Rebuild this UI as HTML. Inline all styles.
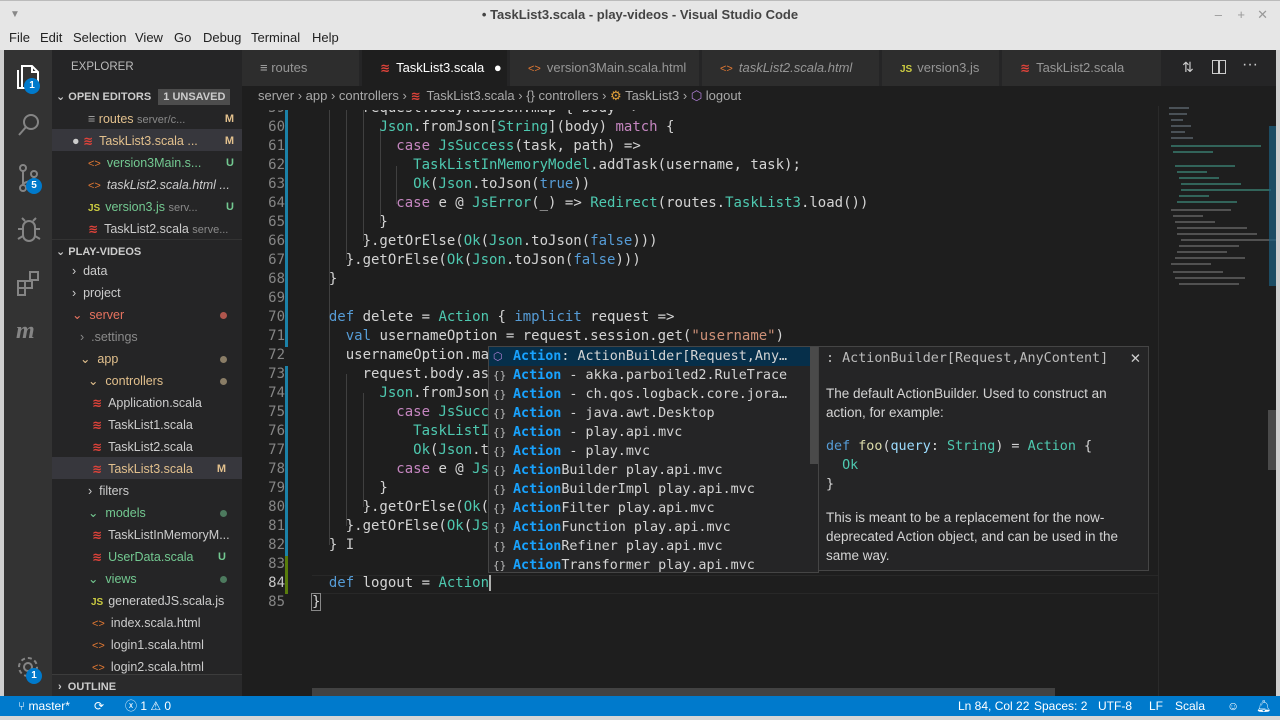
<!DOCTYPE html>
<html><head><meta charset="utf-8"><style>
*{margin:0;padding:0;box-sizing:border-box}
body{width:1280px;height:720px;overflow:hidden;background:#1e1e1e;font-family:"Liberation Sans","DejaVu Sans",sans-serif;position:relative}
.abs{position:absolute}
#title{left:0;top:0;width:1280px;height:28px;background:#e6e6e6;color:#444;font-size:13px;font-weight:bold;text-align:center;line-height:28px;border-top:1px solid #bbb}
#menu{left:0;top:28px;width:1280px;height:22px;background:#e6e6e6;font-size:13px;color:#222;line-height:18px}
#menu span{position:absolute;top:1px}
#act{left:0;top:50px;width:52px;height:646px;background:#333333;border-left:4px solid #cfcfcf}
#side{left:52px;top:50px;width:190px;height:646px;background:#252526;color:#ccc;font-size:12.5px}
.row{position:absolute;left:0;width:190px;height:22px;line-height:24px;white-space:nowrap;overflow:hidden}
.hdr{font-weight:bold;font-size:11px;color:#ccc}
.dim{color:#8a8a8a;font-size:11px}
.M{color:#e2c08d}.U{color:#73c991}.R{color:#e8735f}
.badge{position:absolute;right:8px;font-size:11px;font-weight:bold}
.dot{position:absolute;right:15px;top:9px;width:7px;height:7px;border-radius:50%}
.sc{color:#e0433a;font-weight:bold;font-size:12px;margin-right:6px}
.ht{color:#e37933;margin-right:6px;font-size:11px}
.js{color:#cbcb41;font-weight:bold;font-size:10px;margin-right:5px}
#tabs{left:242px;top:50px;width:1038px;height:36px;background:#252526}
.tab{position:absolute;top:0;height:36px;line-height:36px;background:#2d2d2d;color:#969696;font-size:13px;padding-left:18px;white-space:nowrap;border-right:1px solid #252526}
#bc{left:242px;top:86px;width:916px;height:20px;background:#1e1e1e;color:#a9a9a9;font-size:13px;line-height:20px;padding-left:16px;white-space:nowrap}
#code{left:242px;top:110px;width:916px;height:586px;overflow:hidden;font-family:"DejaVu Sans Mono","Liberation Mono",monospace;font-size:14px}
.ln{position:absolute;left:0;width:43px;text-align:right;color:#858585;height:19px;line-height:19px}
.cl{position:absolute;left:70px;height:19px;line-height:19px;color:#d4d4d4;white-space:pre}
.k{color:#569cd6}.p{color:#c586c0}.t{color:#4ec9b0}.s{color:#ce9178}.f{color:#dcdcaa}
#sug{left:488px;top:346px;width:331px;height:227px;background:#252526;border:1px solid #454545;font-family:"DejaVu Sans Mono",monospace;font-size:13.4px;color:#d4d4d4;z-index:5}
.sr{position:absolute;left:0;width:321px;height:19px;line-height:19px;white-space:pre;padding-left:4px;overflow:hidden}
.sr b{color:#18a3ff;font-weight:bold}
.ic{color:#bbb;font-size:11px;display:inline-block;width:20px}
#det{left:818px;top:346px;width:331px;height:225px;background:#252526;border:1px solid #454545;z-index:5;color:#d4d4d4;font-size:13.5px;padding:0 7px}
#status{left:0;top:696px;width:1280px;height:20px;background:#007acc;color:#fff;font-size:12px;line-height:20px}
#status span{position:absolute;top:0}
</style></head><body>
<div id="title" class="abs"><span style="position:absolute;left:10px;top:0;color:#888;font-size:10px">▼</span>• TaskList3.scala - play-videos - Visual Studio Code<span style="position:absolute;right:58px;color:#999;font-weight:normal">–</span><span style="position:absolute;right:35px;color:#999;font-weight:normal">+</span><span style="position:absolute;right:12px;color:#999;font-weight:normal">✕</span></div>
<div id="menu" class="abs"><span style="left:9px">File</span><span style="left:40px">Edit</span><span style="left:73px">Selection</span><span style="left:135px">View</span><span style="left:174px">Go</span><span style="left:203px">Debug</span><span style="left:251px">Terminal</span><span style="left:312px">Help</span></div>
<div id="act" class="abs">
<svg class="abs" style="left:10px;top:10px" width="30" height="32" viewBox="0 0 30 32" fill="none" stroke="#fff" stroke-width="2"><path d="M8 6h10l6 6v16H8z"/><path d="M4 10v18h4"/><path d="M18 6v6h6"/></svg>
<div class="abs" style="left:20px;top:28px;width:16px;height:16px;border-radius:50%;background:#007acc;color:#fff;font-size:10px;text-align:center;line-height:16px;font-weight:bold">1</div>
<svg class="abs" style="left:10px;top:60px" width="30" height="30" viewBox="0 0 30 30" fill="none" stroke="#858585" stroke-width="2"><circle cx="17" cy="12" r="7"/><path d="M12 17L5 25"/></svg>
<svg class="abs" style="left:10px;top:112px" width="30" height="32" viewBox="0 0 30 32" fill="none" stroke="#858585" stroke-width="2"><circle cx="9" cy="6" r="3"/><circle cx="9" cy="26" r="3"/><circle cx="20" cy="12" r="3"/><path d="M9 9v14M20 15c0 5-11 4-11 8"/></svg>
<div class="abs" style="left:22px;top:128px;width:16px;height:16px;border-radius:50%;background:#007acc;color:#fff;font-size:10px;text-align:center;line-height:16px;font-weight:bold">5</div>
<svg class="abs" style="left:10px;top:165px" width="30" height="30" viewBox="0 0 30 30" fill="none" stroke="#858585" stroke-width="2"><path d="M9 12a6 6 0 0 1 12 0v8a6 6 0 0 1-12 0z"/><path d="M4 14h5M21 14h5M4 24l5-3M26 24l-5-3M11 6L8 3M19 6l3-3"/></svg>
<svg class="abs" style="left:10px;top:218px" width="30" height="30" viewBox="0 0 30 30" fill="none" stroke="#858585" stroke-width="2"><rect x="4" y="13" width="7" height="7"/><rect x="11" y="13" width="7" height="7"/><rect x="4" y="20" width="7" height="7"/><rect x="16" y="4" width="8" height="8"/></svg>
<div class="abs" style="left:12px;top:268px;color:#858585;font-size:24px;font-weight:bold;font-style:italic;font-family:'Liberation Serif',serif">m</div>
<svg class="abs" style="left:10px;top:603px" width="30" height="30" viewBox="0 0 30 30" fill="none" stroke="#858585" stroke-width="2"><circle cx="14" cy="14" r="4"/><circle cx="14" cy="14" r="9" stroke-dasharray="4 3"/></svg>
<div class="abs" style="left:22px;top:618px;width:16px;height:16px;border-radius:50%;background:#007acc;color:#fff;font-size:10px;text-align:center;line-height:16px;font-weight:bold">1</div>
</div>
<div id="side" class="abs">
<div class="row" style="top:5px;padding-left:19px;font-size:11.5px;color:#bbb">EXPLORER</div>
<div class="row hdr" style="top:35px;padding-left:4px">&#8964; OPEN EDITORS <span style="background:#4d4d4d;padding:2px 5px;margin-left:4px;font-weight:bold">1 UNSAVED</span></div>
<div class="row" style="top:57px;padding-left:36px"><span style="color:#aaa">≡ </span><span class="M">routes</span> <span class="dim">server/c...</span><span class="badge M">M</span></div>
<div class="row" style="top:79px;padding-left:20px;background:#37373d"><span style="color:#ccc">●</span> <span class="sc">≋</span><span class="M">TaskList3.scala ...</span><span class="badge M">M</span></div>
<div class="row" style="top:101px;padding-left:36px"><span class="ht">&lt;&gt;</span><span class="U">version3Main.s...</span><span class="badge U">U</span></div>
<div class="row" style="top:123px;padding-left:36px"><span class="ht">&lt;&gt;</span><i style="color:#ccc">taskList2.scala.html ...</i></div>
<div class="row" style="top:145px;padding-left:36px"><span class="js">JS</span><span class="U">version3.js</span> <span class="dim">serv...</span><span class="badge U">U</span></div>
<div class="row" style="top:167px;padding-left:36px"><span class="sc">≋</span>TaskList2.scala <span class="dim">serve...</span></div>
<div class="row hdr" style="top:189px;padding-left:4px;border-top:1px solid #333">&#8964; PLAY-VIDEOS</div>
<div class="row" style="top:209px;padding-left:20px">›&nbsp; data</div>
<div class="row" style="top:231px;padding-left:20px">›&nbsp; project</div>
<div class="row" style="top:253px;padding-left:20px"><span class="R">&#8964;&nbsp; server</span><span class="dot" style="background:#b0564d"></span></div>
<div class="row" style="top:275px;padding-left:28px;color:#8a8a8a">›&nbsp; .settings</div>
<div class="row" style="top:297px;padding-left:28px"><span class="M">&#8964;&nbsp; app</span><span class="dot" style="background:#8a7d66"></span></div>
<div class="row" style="top:319px;padding-left:36px"><span class="M">&#8964;&nbsp; controllers</span><span class="dot" style="background:#8a7d66"></span></div>
<div class="row" style="top:341px;padding-left:40px"><span class="sc">≋</span>Application.scala</div>
<div class="row" style="top:363px;padding-left:40px"><span class="sc">≋</span>TaskList1.scala</div>
<div class="row" style="top:385px;padding-left:40px"><span class="sc">≋</span>TaskList2.scala</div>
<div class="row" style="top:407px;padding-left:40px;background:#37373d"><span class="sc">≋</span><span class="M">TaskList3.scala</span><span class="badge M" style="right:16px">M</span></div>
<div class="row" style="top:429px;padding-left:36px">›&nbsp; filters</div>
<div class="row" style="top:451px;padding-left:36px"><span class="U">&#8964;&nbsp; models</span><span class="dot" style="background:#4d7a5e"></span></div>
<div class="row" style="top:473px;padding-left:40px"><span class="sc">≋</span>TaskListInMemoryM...</div>
<div class="row" style="top:495px;padding-left:40px"><span class="sc">≋</span><span class="U">UserData.scala</span><span class="badge U" style="right:16px">U</span></div>
<div class="row" style="top:517px;padding-left:36px"><span class="U">&#8964;&nbsp; views</span><span class="dot" style="background:#4d7a5e"></span></div>
<div class="row" style="top:539px;padding-left:39px"><span class="js">JS</span>generatedJS.scala.js</div>
<div class="row" style="top:561px;padding-left:40px"><span class="ht">&lt;&gt;</span>index.scala.html</div>
<div class="row" style="top:583px;padding-left:40px"><span class="ht">&lt;&gt;</span>login1.scala.html</div>
<div class="row" style="top:605px;padding-left:40px"><span class="ht">&lt;&gt;</span>login2.scala.html</div>
<div class="row hdr" style="top:624px;padding-left:6px;background:#2a2a2b;border-top:1px solid #3c3c3c">›&nbsp; OUTLINE</div>
</div>
<div id="tabs" class="abs">
<div class="tab" style="left:0;width:118px"><span style="color:#aaa">≡</span> routes</div>
<div class="tab" style="left:120px;width:146px;background:#1e1e1e;color:#fff"><span class="sc">≋</span>TaskList3.scala <span style="margin-left:6px">●</span></div>
<div class="tab" style="left:268px;width:190px"><span class="ht">&lt;&gt;</span>version3Main.scala.html</div>
<div class="tab" style="left:460px;width:178px"><span class="ht">&lt;&gt;</span><i>taskList2.scala.html</i></div>
<div class="tab" style="left:640px;width:118px"><span class="js">JS</span>version3.js</div>
<div class="tab" style="left:760px;width:160px"><span class="sc">≋</span>TaskList2.scala</div>
<div class="abs" style="left:940px;top:9px;color:#ccc;font-size:14px">⇅</div>
<div class="abs" style="left:970px;top:10px;width:14px;height:14px;border:1.5px solid #ccc"><div style="position:absolute;left:5px;top:0;width:1.5px;height:12px;background:#ccc"></div></div>
<div class="abs" style="left:1000px;top:6px;color:#ccc;font-size:16px">···</div>
</div>
<div id="bc" class="abs">server › app › controllers › <span class="sc">≋</span>TaskList3.scala › {} controllers › <span style="color:#e2a03a">⚙</span> TaskList3 › <span style="color:#b180d7">⬡</span> logout</div>
<div id="code" class="abs">
<div class="abs" style="left:43px;top:0;width:3px;height:237px;background:#1b81a8"></div>
<div class="abs" style="left:43px;top:256px;width:3px;height:228px;background:#1b81a8"></div>
<div class="abs" style="left:43px;top:446px;width:3px;height:38px;background:#587c0c"></div>
<div class="abs" style="left:87px;top:0;width:1px;height:435px;background:#404040"></div>
<div class="abs" style="left:104px;top:0;width:1px;height:150px;background:#404040"></div>
<div class="abs" style="left:104px;top:264px;width:1px;height:152px;background:#404040"></div>
<div class="abs" style="left:121px;top:0;width:1px;height:131px;background:#404040"></div>
<div class="abs" style="left:121px;top:283px;width:1px;height:114px;background:#404040"></div>
<div class="abs" style="left:138px;top:18px;width:1px;height:95px;background:#404040"></div>
<div class="abs" style="left:154px;top:56px;width:1px;height:38px;background:#404040"></div>
<div class="abs" style="left:70px;top:465px;width:846px;height:19px;border-top:1px solid #282828;border-bottom:1px solid #282828"></div>
<div class="ln" style="top:-11px">59</div><div class="cl" style="top:-11px">      request.body.asJson.map { body =&gt;</div>
<div class="ln" style="top:8px">60</div><div class="cl" style="top:8px">        <span class="t">Json</span>.fromJson[<span class="t">String</span>](body) <span class="p">match</span> {</div>
<div class="ln" style="top:27px">61</div><div class="cl" style="top:27px">          <span class="p">case</span> <span class="t">JsSuccess</span>(task, path) =&gt;</div>
<div class="ln" style="top:46px">62</div><div class="cl" style="top:46px">            <span class="t">TaskListInMemoryModel</span>.addTask(username, task);</div>
<div class="ln" style="top:65px">63</div><div class="cl" style="top:65px">            <span class="t">Ok</span>(<span class="t">Json</span>.toJson(<span class="k">true</span>))</div>
<div class="ln" style="top:84px">64</div><div class="cl" style="top:84px">          <span class="p">case</span> e @ <span class="t">JsError</span>(_) =&gt; <span class="t">Redirect</span>(routes.<span class="t">TaskList3</span>.load())</div>
<div class="ln" style="top:103px">65</div><div class="cl" style="top:103px">        }</div>
<div class="ln" style="top:122px">66</div><div class="cl" style="top:122px">      }.getOrElse(<span class="t">Ok</span>(<span class="t">Json</span>.toJson(<span class="k">false</span>)))</div>
<div class="ln" style="top:141px">67</div><div class="cl" style="top:141px">    }.getOrElse(<span class="t">Ok</span>(<span class="t">Json</span>.toJson(<span class="k">false</span>)))</div>
<div class="ln" style="top:160px">68</div><div class="cl" style="top:160px">  }</div>
<div class="ln" style="top:179px">69</div>
<div class="ln" style="top:198px">70</div><div class="cl" style="top:198px">  <span class="k">def</span> delete = <span class="t">Action</span> { <span class="k">implicit</span> request =&gt;</div>
<div class="ln" style="top:217px">71</div><div class="cl" style="top:217px">    <span class="k">val</span> usernameOption = request.session.get(<span class="s">"username"</span>)</div>
<div class="ln" style="top:236px">72</div><div class="cl" style="top:236px">    usernameOption.map { username =&gt;</div>
<div class="ln" style="top:255px">73</div><div class="cl" style="top:255px">      request.body.asJson.map { body =&gt;</div>
<div class="ln" style="top:274px">74</div><div class="cl" style="top:274px">        <span class="t">Json</span>.fromJson[<span class="t">String</span>](body) <span class="p">match</span> {</div>
<div class="ln" style="top:293px">75</div><div class="cl" style="top:293px">          <span class="p">case</span> <span class="t">JsSuccess</span>(task, path) =&gt;</div>
<div class="ln" style="top:312px">76</div><div class="cl" style="top:312px">            <span class="t">TaskListInMemoryModel</span>.addTask</div>
<div class="ln" style="top:331px">77</div><div class="cl" style="top:331px">            <span class="t">Ok</span>(<span class="t">Json</span>.toJson(<span class="k">true</span>))</div>
<div class="ln" style="top:350px">78</div><div class="cl" style="top:350px">          <span class="p">case</span> e @ <span class="t">JsError</span>(_) =&gt;</div>
<div class="ln" style="top:369px">79</div><div class="cl" style="top:369px">        }</div>
<div class="ln" style="top:388px">80</div><div class="cl" style="top:388px">      }.getOrElse(<span class="t">Ok</span>(<span class="t">Json</span>.toJson(<span class="k">false</span>)))</div>
<div class="ln" style="top:407px">81</div><div class="cl" style="top:407px">    }.getOrElse(<span class="t">Ok</span>(<span class="t">Json</span>.toJson(<span class="k">false</span>)))</div>
<div class="ln" style="top:426px">82</div><div class="cl" style="top:426px">  } <span style="color:#ccc">I</span></div>
<div class="ln" style="top:445px">83</div>
<div class="ln" style="top:464px;color:#c6c6c6">84</div><div class="cl" style="top:464px">  <span class="k">def</span> logout = <span class="t">Action</span><span style="border-left:2px solid #aeafad;margin-left:0"></span></div>
<div class="ln" style="top:483px">85</div><div class="cl" style="top:483px"><span style="outline:1px solid #888">}</span></div>
<div class="abs" style="left:70px;top:578px;width:743px;height:8px;background:#424242"></div>
</div>
<div class="abs" style="left:1158px;top:106px;width:122px;height:590px;background:#1e1e1e;border-left:1px solid #2a2a2a">
<svg width="122" height="200" style="opacity:.55">
<g stroke="#8a9aa8" stroke-width="1.5"><path d="M10 2h20M10 8h18M12 14h12M12 20h20M12 26h14M12 32h22"/></g>
<g stroke="#4ec9b0" stroke-width="1.5"><path d="M12 40h90M14 46h40M16 60h60M18 66h30M20 72h40M22 78h60M22 84h90M20 90h30M18 96h60"/></g>
<g stroke="#9a9a9a" stroke-width="1.5"><path d="M12 104h60M14 110h30M16 116h40M18 122h70M18 128h80M22 134h100M20 140h60M18 146h50M16 152h70M12 158h40M14 166h50M16 172h70M20 178h60"/></g>
</svg>
<div class="abs" style="left:110px;top:20px;width:8px;height:160px;background:#1b5f80;opacity:.7"></div>
</div>
<div class="abs" style="left:1268px;top:410px;width:8px;height:60px;background:#4a4a4a"></div>
<div class="abs" style="left:1276px;top:50px;width:4px;height:670px;background:#cfcfcf"></div>
<div id="sug" class="abs">
<div class="sr" style="top:0;background:#062f4a"><span class="ic" style="color:#b180d7">⬡</span><b>Action</b>: ActionBuilder[Request,Any…</div>
<div class="sr" style="top:19px"><span class="ic">{}</span><b>Action</b> - akka.parboiled2.RuleTrace</div>
<div class="sr" style="top:38px"><span class="ic">{}</span><b>Action</b> - ch.qos.logback.core.jora…</div>
<div class="sr" style="top:57px"><span class="ic">{}</span><b>Action</b> - java.awt.Desktop</div>
<div class="sr" style="top:76px"><span class="ic">{}</span><b>Action</b> - play.api.mvc</div>
<div class="sr" style="top:95px"><span class="ic">{}</span><b>Action</b> - play.mvc</div>
<div class="sr" style="top:114px"><span class="ic">{}</span><b>Action</b>Builder play.api.mvc</div>
<div class="sr" style="top:133px"><span class="ic">{}</span><b>Action</b>BuilderImpl play.api.mvc</div>
<div class="sr" style="top:152px"><span class="ic">{}</span><b>Action</b>Filter play.api.mvc</div>
<div class="sr" style="top:171px"><span class="ic">{}</span><b>Action</b>Function play.api.mvc</div>
<div class="sr" style="top:190px"><span class="ic">{}</span><b>Action</b>Refiner play.api.mvc</div>
<div class="sr" style="top:209px"><span class="ic">{}</span><b>Action</b>Transformer play.api.mvc</div>
<div class="abs" style="left:321px;top:0;width:9px;height:117px;background:#4a4a4a"></div>
</div>
<div id="det" class="abs">
<div style="font-family:'DejaVu Sans Mono',monospace;font-size:13.4px;color:#bbb;margin-top:4px">: ActionBuilder[Request,AnyContent]<span style="float:right;font-family:'Liberation Sans';color:#ccc">✕</span></div>
<div style="margin-top:18px;line-height:19px">The default ActionBuilder. Used to construct an action, for example:</div>
<div style="margin-top:15px;font-family:'DejaVu Sans Mono',monospace;font-size:13.4px;line-height:19px"><span class="k">def</span> <span class="f">foo</span>(<span style="color:#9cdcfe">query</span>: <span class="t">String</span>) = <span class="t">Action</span> {<br>&nbsp;&nbsp;<span class="t">Ok</span><br>}</div>
<div style="margin-top:14px;line-height:19px">This is meant to be a replacement for the now-deprecated Action object, and can be used in the same way.</div>
</div>
<div id="status" class="abs">
<span style="left:18px">⑂ master*</span><span style="left:94px">⟳</span><span style="left:125px">ⓧ 1 ⚠ 0</span>
<span style="left:958px">Ln 84, Col 22</span><span style="left:1034px">Spaces: 2</span><span style="left:1098px">UTF-8</span><span style="left:1149px">LF</span><span style="left:1175px">Scala</span><span style="left:1227px">☺</span><span style="left:1256px">🔔︎</span>
</div>
<div class="abs" style="left:0;top:716px;width:1280px;height:4px;background:#d6d6d6"></div>
</body></html>
